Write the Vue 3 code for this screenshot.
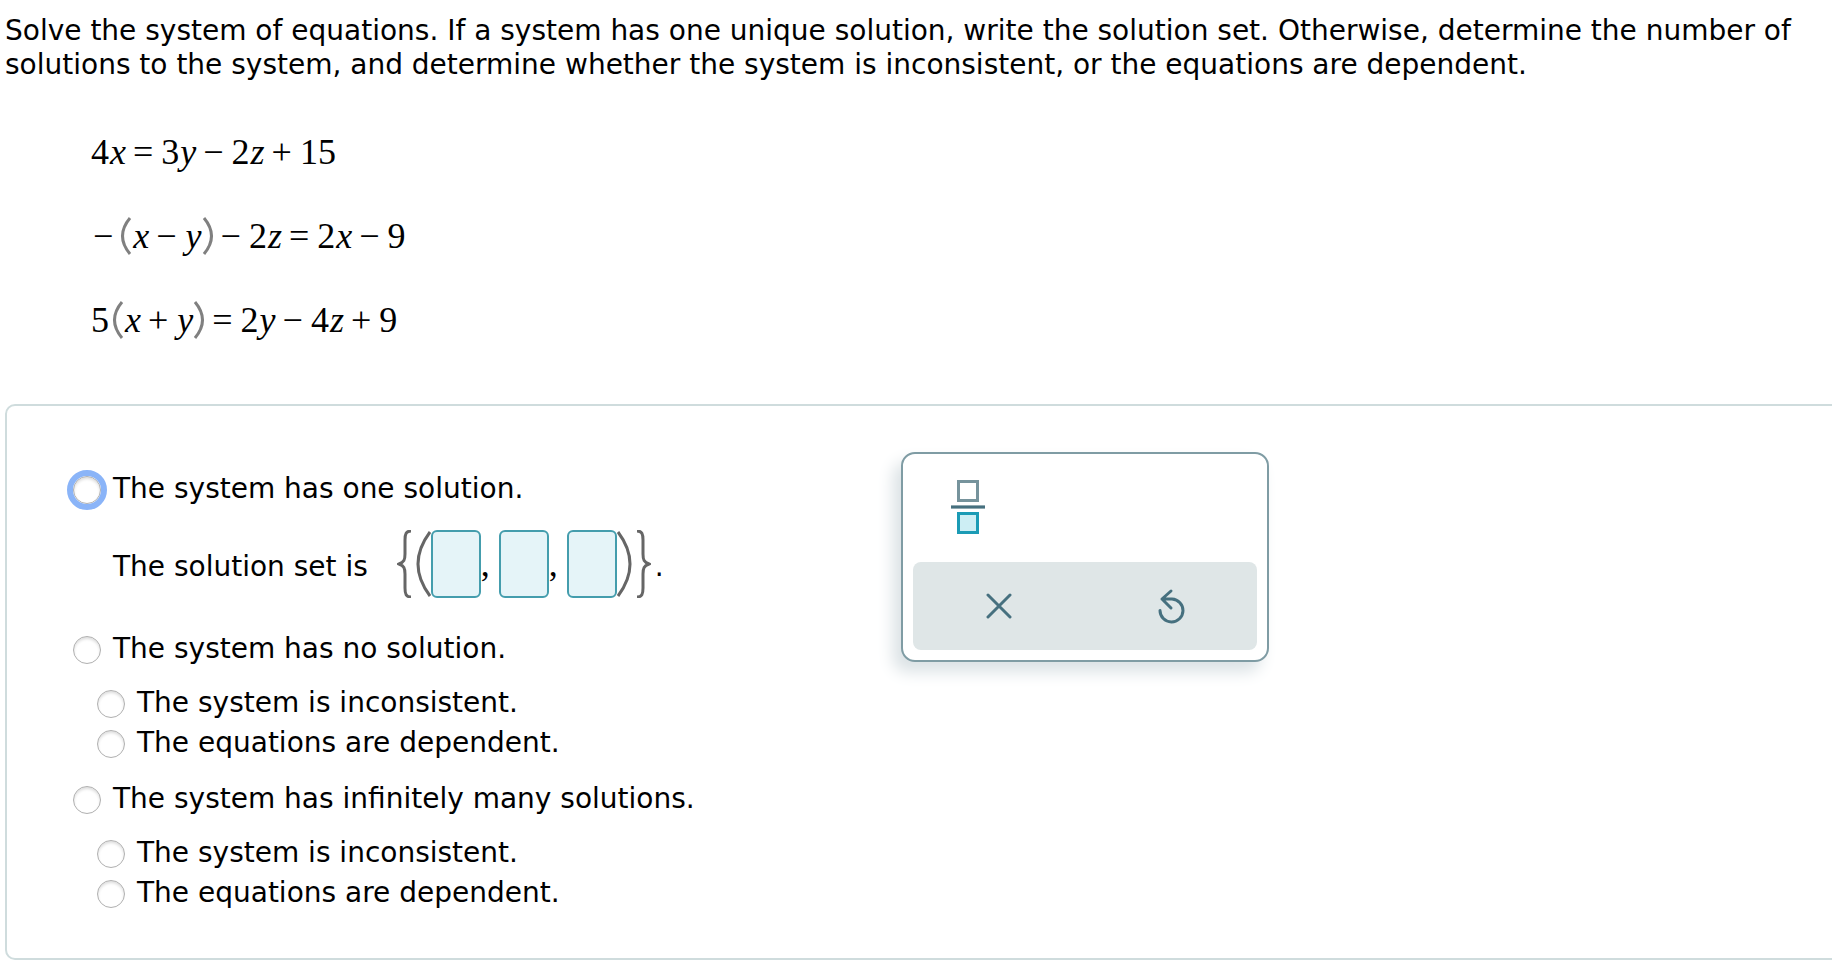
<template>
  <main class="problem">
    <p class="prompt">
      Solve the system of equations. If a system has one unique solution, write the solution set. Otherwise, determine the number of
      solutions to the system, and determine whether the system is inconsistent, or the equations are dependent.
    </p>

    <div class="equations">
      <div v-for="(eq, i) in equations" :key="i" class="equation">
        <template v-for="(t, j) in eq" :key="j">
          <svg v-if="t === '('" class="paren open" viewBox="0 0 12 38"><path d="M10 1Q-5 19 10 37" /></svg>
          <svg v-else-if="t === ')'" class="paren" viewBox="0 0 12 38"><path d="M2 1Q17 19 2 37" /></svg>
          <span v-else :class="tokenClass(t, j)">{{ t }}</span>
        </template>
      </div>
    </div>

    <section class="answer">
      <form class="options" @submit.prevent>
        <label class="option">
          <input v-model="solution" class="focused" type="radio" name="solution" value="one">
          <span>The system has one solution.</span>
        </label>

        <div class="solution-set">
          <span class="set-text">The solution set is</span>
          <div class="set">
            <svg class="brace" viewBox="0 0 16 68"><path d="M14 1C9 1 8 4 8 10V24C8 30 7 32 2 34C7 36 8 38 8 44V58C8 64 9 67 14 67" /></svg>
            <svg class="big-paren" viewBox="0 0 16 68"><path d="M15 2Q-9 34 15 66" /></svg>
            <input v-model="values[0]" type="text" aria-label="x">
            <span class="comma">,</span>
            <input v-model="values[1]" type="text" aria-label="y">
            <span class="comma">,</span>
            <input v-model="values[2]" type="text" aria-label="z">
            <svg class="big-paren" viewBox="0 0 16 68"><path d="M1 2Q25 34 1 66" /></svg>
            <svg class="brace" viewBox="0 0 16 68"><path d="M2 1C7 1 8 4 8 10V24C8 30 9 32 14 34C9 36 8 38 8 44V58C8 64 7 67 2 67" /></svg>
          </div>
          <span class="set-text">.</span>
        </div>

        <div v-for="group in groups" :key="group.value" class="group">
          <label class="option">
            <input v-model="solution" type="radio" name="solution" :value="group.value">
            <span>{{ group.label }}</span>
          </label>
          <div class="sub-options">
            <label v-for="kind in kinds" :key="kind" class="option">
              <input v-model="group.kind" type="radio" :name="'kind-' + group.value" :value="kind">
              <span>{{ kind }}</span>
            </label>
          </div>
        </div>
      </form>

      <div class="tools">
        <div class="tools-keys">
          <button type="button" aria-label="Fraction">
            <svg width="34" height="54" viewBox="0 0 34 54">
              <rect x="7.5" y="1.5" width="19" height="19" fill="#fff" stroke="#76939c" stroke-width="3" />
              <rect y="25" width="34" height="4" fill="#91a9b1" />
              <rect y="26" width="34" height="2" fill="#46707f" />
              <rect x="7.5" y="33.5" width="19" height="19" fill="#cdeef4" stroke="#1b9bb5" stroke-width="3" />
            </svg>
          </button>
        </div>
        <div class="tools-actions">
          <button type="button" aria-label="Clear" @click="clear">
            <svg width="26" height="26" viewBox="0 0 26 26"><path d="M2 2L24 24M24 2L2 24" /></svg>
          </button>
          <button type="button" aria-label="Undo" @click="reset">
            <svg width="28" height="36" viewBox="0 0 28 36"><path d="M14 3L5 11L14 20M5 11H15A11.5 11.5 0 1 1 3 22.500" /></svg>
          </button>
        </div>
      </div>
    </section>
  </main>
</template>

<script setup>
import { ref } from 'vue';

const equations = [
  ['4', 'x', '=', '3', 'y', '−', '2', 'z', '+', '15'],
  ['−', '(', 'x', '−', 'y', ')', '−', '2', 'z', '=', '2', 'x', '−', '9'],
  ['5', '(', 'x', '+', 'y', ')', '=', '2', 'y', '−', '4', 'z', '+', '9']
];

const kinds = ['The system is inconsistent.', 'The equations are dependent.'];

const groups = ref([
  { value: 'none', label: 'The system has no solution.', kind: '' },
  { value: 'many', label: 'The system has infinitely many solutions.', kind: '' }
]);

const solution = ref('');
const values = ref(['', '', '']);

const tokenClass = (token, index) => {
  if ('=+−'.includes(token)) {
    return index === 0 ? 'sign' : 'operator';
  }
  return /[a-z]/.test(token) ? 'variable' : 'number';
};

const clear = () => {
  values.value = ['', '', ''];
};

const reset = () => {
  clear();
  solution.value = '';
  groups.value.forEach(group => {
    group.kind = '';
  });
};
</script>

<style>
body {
  background: #fff;
  overflow-x: hidden;
}
</style>

<style scoped>
.problem {
  padding: 14px 0 16px 5px;
  font-family: Verdana, "DejaVu Sans", sans-serif;
  font-size: 28px;
  line-height: 34px;
  color: #000;
}

.prompt {
  margin: 0;
}

.equations {
  display: flex;
  flex-direction: column;
  padding: 28px 0 42px 86px;
}

.equation {
  display: flex;
  align-items: center;
  height: 84px;
  font-family: "Times New Roman", "Liberation Serif", serif;
  font-size: 36px;
}

.variable {
  margin-left: 1px;
  font-style: italic;
}

.operator {
  margin: 0 8px 0 7px;
}

.sign {
  margin: 0 4px 0 2px;
}

.paren {
  width: 12px;
  height: 38px;
}

.paren.open {
  margin-left: 3px;
}

.paren path,
.brace path,
.big-paren path {
  fill: none;
  stroke: #666;
  stroke-width: 3;
}

.paren path {
  stroke: #808080;
}

.answer {
  display: grid;
  grid-template-columns: 47% auto;
  justify-content: start;
  align-items: start;
  margin-right: -12px;
  padding: 46px 0 28px 60px;
  border: 2px solid #cfdcdd;
  border-radius: 10px;
}

.options {
  padding-top: 18px;
}

.option {
  display: flex;
  align-items: center;
  gap: 12px;
  height: 40px;
}

.option span {
  padding-bottom: 2px;
}

.option input {
  appearance: none;
  flex: none;
  width: 28px;
  height: 28px;
  margin: 0 0 0 6px;
  border: 1px solid #b0b0b0;
  border-radius: 50%;
  background: #fff;
  box-shadow: inset 0 2px 3px #ddd;
}

.option input.focused {
  outline: 6px solid #8ab4f8;
}

.solution-set {
  display: flex;
  align-items: center;
  box-sizing: border-box;
  height: 120px;
  padding: 0 0 12px 46px;
}

.set-text {
  padding-top: 6px;
}

.set {
  display: flex;
  align-items: center;
  margin: 0 4px 0 29px;
}

.set input {
  box-sizing: border-box;
  width: 50px;
  height: 68px;
  padding: 0;
  border: 2px solid #449dad;
  border-radius: 6px;
  background: #e5f4f8;
  font: inherit;
  text-align: center;
}

.comma {
  width: 18px;
  font-family: "Times New Roman", "Liberation Serif", serif;
  font-size: 36px;
}

.brace,
.big-paren {
  width: 16px;
  height: 68px;
}

.brace:first-child {
  margin-right: 2px;
}

.brace:last-child {
  margin-left: 2px;
}

.sub-options {
  padding: 14px 0 16px 24px;
}

.tools {
  box-sizing: border-box;
  width: 368px;
  padding: 10px;
  border: 2px solid #7f9ca4;
  border-radius: 14px;
  background: #fff;
  box-shadow: -8px 10px 16px #dbe2e5;
}

.tools button {
  display: flex;
  padding: 0;
  border: 0;
  background: none;
  cursor: pointer;
}

.tools-keys {
  padding: 16px 38px 28px;
}

.tools-actions {
  display: grid;
  grid-template-columns: 1fr 1fr;
  place-items: center;
  height: 88px;
  border-radius: 8px;
  background: #dfe6e7;
}

.tools-actions path {
  fill: none;
  stroke: #46707f;
  stroke-width: 3;
  stroke-linecap: round;
  stroke-linejoin: round;
}
</style>
